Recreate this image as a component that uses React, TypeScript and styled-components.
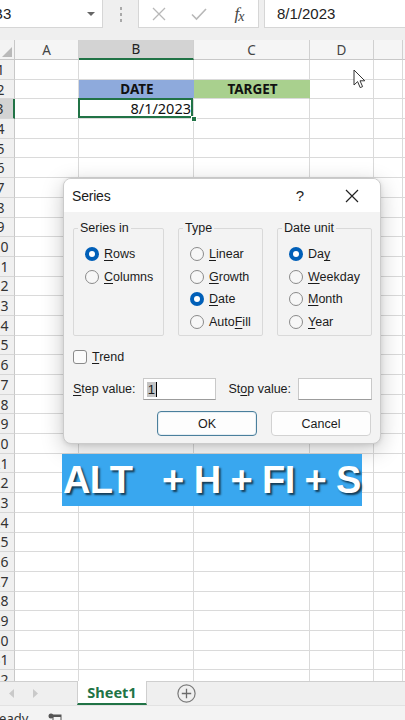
import React from 'react';
import styled, { createGlobalStyle } from 'styled-components';

const GlobalStyle = createGlobalStyle`
  html, body { margin: 0; padding: 0; }
  body {
    width: 405px;
    height: 720px;
    overflow: hidden;
    background: #fff;
    font-family: 'Liberation Sans', Arial, sans-serif;
  }
  * { box-sizing: border-box; }
`;

const GREEN = '#217346';
const GRID = '#dadada';

const COLS = [
  { label: 'A', width: 64 },
  { label: 'B', width: 115 },
  { label: 'C', width: 116 },
  { label: 'D', width: 64 },
  { label: '', width: 29 },
];

type CellData = { text: string; fill?: string; bold?: boolean; align?: 'left' | 'center' | 'right'; selected?: boolean };

const DATA: Record<string, CellData> = {
  '2-1': { text: 'DATE', fill: '#8eaadc', bold: true, align: 'center' },
  '2-2': { text: 'TARGET', fill: '#a9d08e', bold: true, align: 'center' },
  '3-1': { text: '8/1/2023', align: 'right', selected: true },
};

const ROW_COUNT = 32;
const SELECTED_ROW = 3;
const SELECTED_COL = 1;

const Page = styled.div`
  position: relative;
  width: 405px;
  height: 720px;
  display: flex;
  flex-direction: column;
  overflow: hidden;
  background: #fff;
`;

/* ---------- formula bar ---------- */

const TopBar = styled.div`
  height: 40px;
  flex-shrink: 0;
  background: #efefef;
  display: flex;
  align-items: flex-start;
`;

const NameBox = styled.div`
  width: 103px;
  height: 28px;
  background: #fff;
  border-right: 1px solid #d6d6d6;
  border-bottom: 1px solid #d6d6d6;
  display: flex;
  align-items: center;
  justify-content: space-between;
  padding-right: 7px;
  font-size: 15px;
  color: #222;
`;

const NameText = styled.span`
  margin-left: -7px;
`;

const Grip = styled.div`
  width: 35px;
  height: 28px;
  display: flex;
  flex-direction: column;
  align-items: center;
  justify-content: center;
  gap: 3px;
`;

const GripDot = styled.span`
  width: 2px;
  height: 3px;
  background: #a9a9a9;
`;

const FxBox = styled.div`
  width: 121px;
  height: 28px;
  margin-right: 5px;
  background: #fff;
  border: 1px solid #d6d6d6;
  border-top: none;
  display: grid;
  grid-template-columns: repeat(3, 40px);
  align-items: center;
  justify-items: center;
`;

const FxText = styled.span`
  font-family: 'Liberation Serif', serif;
  font-style: italic;
  font-size: 17px;
  color: #444;
  letter-spacing: -1px;
`;

const FxSub = styled.span`
  font-size: 14px;
  position: relative;
  top: 2px;
`;

const FormulaInput = styled.div`
  flex: 1;
  height: 28px;
  background: #fff;
  border-left: 1px solid #d6d6d6;
  border-bottom: 1px solid #d6d6d6;
  display: flex;
  align-items: center;
  padding-left: 12px;
  font-size: 15px;
  color: #222;
`;

/* ---------- sheet ---------- */

const Sheet = styled.div`
  flex: 1;
  overflow: hidden;
  display: grid;
  grid-template-columns: 15px ${COLS.map(c => `${c.width}px`).join(' ')} 1fr;
  grid-template-rows: 20px;
  grid-auto-rows: 19.7px;
  align-content: start;
`;

const Corner = styled.div`
  background: #f3f3f3;
  border-right: 1px solid #c8c8c8;
  border-bottom: 1px solid #c8c8c8;
  display: flex;
  align-items: flex-end;
  justify-content: flex-end;
  padding: 0 2px 2px 0;
`;

const ColHead = styled.div<{ $active?: boolean }>`
  background: ${p => (p.$active ? '#d3d3d3' : '#f5f5f5')};
  border-right: 1px solid #d0d0d0;
  border-bottom: ${p => (p.$active ? `2px solid ${GREEN}` : '1px solid #c8c8c8')};
  display: flex;
  align-items: center;
  justify-content: center;
  font-family: 'Noto Sans', sans-serif;
  font-size: 13.5px;
  color: ${p => (p.$active ? '#222' : '#444')};
`;

const RowHead = styled.div<{ $active?: boolean }>`
  background: ${p => (p.$active ? '#d3d3d3' : '#f0f0f0')};
  border-right: ${p => (p.$active ? `2px solid ${GREEN}` : '1px solid #c8c8c8')};
  border-bottom: 1px solid #d6d6d6;
  display: flex;
  align-items: center;
  justify-content: flex-end;
  overflow: hidden;
  font-family: 'Noto Sans', sans-serif;
  font-size: 14px;
  color: #333;
`;

/* the heading is wider than the visible strip: only its right part shows */
const RowNumber = styled.span`
  flex-shrink: 0;
  width: 27px;
  text-align: center;
`;

const Cell = styled.div<{ $fill?: string; $bold?: boolean; $align?: string; $selected?: boolean; $last?: boolean }>`
  position: relative;
  background: ${p => p.$fill || '#fff'};
  border-right: 1px solid ${p => (p.$last ? 'transparent' : p.$fill || GRID)};
  border-bottom: 1px solid ${GRID};
  display: flex;
  align-items: center;
  justify-content: ${p => (p.$align === 'right' ? 'flex-end' : p.$align === 'center' ? 'center' : 'flex-start')};
  padding: 0 2px 0 4px;
  white-space: nowrap;
  font-family: 'Noto Sans', sans-serif;
  font-size: ${p => (p.$bold ? '13.5px' : '14.5px')};
  font-weight: ${p => (p.$bold ? 700 : 400)};
  color: #111;
  overflow: ${p => (p.$selected ? 'visible' : 'hidden')};
  box-shadow: ${p => (p.$selected ? `inset 0 0 0 2px ${GREEN}` : 'none')};
  margin: ${p => (p.$selected ? '-1px 0 0 -1px' : '0')};
  z-index: ${p => (p.$selected ? 2 : 'auto')};
`;

const FillHandle = styled.span`
  position: absolute;
  right: -4px;
  bottom: -4px;
  width: 6px;
  height: 6px;
  background: ${GREEN};
  border: 1px solid #fff;
`;

/* ---------- tabs & status ---------- */

const TabBar = styled.div`
  height: 24px;
  flex-shrink: 0;
  background: #efefef;
  border-top: 1px solid #cfcfcf;
  display: flex;
  align-items: stretch;
`;

const TabNav = styled.div`
  width: 77px;
  display: flex;
  align-items: center;
  gap: 19px;
  padding-left: 9px;
`;

const SheetTab = styled.div`
  width: 70px;
  margin-top: -1px;
  background: #fff;
  border-left: 1px solid #cfcfcf;
  border-right: 1px solid #cfcfcf;
  border-bottom: 2px solid ${GREEN};
  display: flex;
  align-items: center;
  justify-content: center;
  font-family: 'Noto Sans', sans-serif;
  font-size: 14.5px;
  font-weight: 700;
  color: ${GREEN};
`;

const AddSheet = styled.div`
  margin-left: 30px;
  display: flex;
  align-items: center;
`;

const StatusBar = styled.div`
  height: 15px;
  flex-shrink: 0;
  background: #f3f3f3;
  border-top: 1px solid #e2e2e2;
  display: flex;
  align-items: flex-start;
  overflow: hidden;
  padding-top: 5px;
  font-family: 'Noto Sans', sans-serif;
  font-size: 13px;
  color: #333;
`;

const StatusText = styled.span`
  margin-left: -9px;
  line-height: 14px;
`;

const StatusIcon = styled.span`
  margin-left: 20px;
  margin-top: 2px;
  display: flex;
`;

/* ---------- dialog ---------- */

const Dialog = styled.div`
  position: absolute;
  left: 63px;
  top: 178px;
  width: 318px;
  height: 266px;
  z-index: 10;
  background: #f3f3f3;
  border: 1px solid #cbcbcb;
  border-radius: 8px;
  box-shadow: 0 6px 22px rgba(0, 0, 0, 0.22), 0 1px 4px rgba(0, 0, 0, 0.1);
  overflow: hidden;
  font-family: 'Liberation Sans', Arial, sans-serif;
  font-size: 12.5px;
  color: #1b1b1b;
`;

const TitleBar = styled.div`
  height: 33px;
  background: #fff;
  display: flex;
  align-items: center;
  padding-left: 8px;
`;

const Title = styled.div`
  flex: 1;
  font-size: 14px;
  letter-spacing: -0.2px;
`;

const TitleButtons = styled.div`
  display: flex;
  gap: 6px;
  margin-right: 5px;
`;

const TitleButton = styled.div`
  width: 46px;
  height: 33px;
  display: flex;
  align-items: center;
  justify-content: center;
  font-size: 15px;
  color: #222;
`;

const Body = styled.div`
  padding: 7px 8px 0 9px;
  display: flex;
  flex-direction: column;
`;

const Groups = styled.div`
  display: flex;
  gap: 14px;
`;

const Group = styled.fieldset<{ $width: number }>`
  width: ${p => p.$width}px;
  height: 117px;
  margin: 0;
  padding: 0;
  border: 1px solid #d9d9d9;
  border-radius: 2px;
  min-width: 0;
`;

const Legend = styled.legend`
  margin-left: 4px;
  padding: 0 2px;
  line-height: 18px;
  font-size: 12.5px;
`;

const Options = styled.div`
  display: flex;
  flex-direction: column;
  padding: 6px 0 0 11px;
`;

const Option = styled.div`
  height: 22.5px;
  display: flex;
  align-items: center;
  gap: 5px;
  white-space: nowrap;
`;

const RadioDot = styled.span<{ $checked?: boolean }>`
  flex-shrink: 0;
  width: 14px;
  height: 14px;
  border-radius: 50%;
  background: ${p => (p.$checked ? '#005fb8' : '#f7f7f7')};
  border: ${p => (p.$checked ? 'none' : '1px solid #8a8a8a')};
  display: flex;
  align-items: center;
  justify-content: center;
  &::after {
    content: '';
    display: ${p => (p.$checked ? 'block' : 'none')};
    width: 6px;
    height: 6px;
    border-radius: 50%;
    background: #fff;
  }
`;

const Key = styled.span`
  text-decoration: underline;
  text-underline-offset: 2px;
`;

const TrendRow = styled.div`
  margin-top: 14px;
  height: 14px;
  display: flex;
  align-items: center;
  gap: 5px;
`;

const CheckBox = styled.span`
  width: 14px;
  height: 14px;
  border-radius: 3px;
  border: 1px solid #8a8a8a;
  background: #fbfbfb;
`;

const ValueRow = styled.div`
  margin-top: 14px;
  height: 22px;
  display: flex;
  align-items: center;
`;

const FieldLabel = styled.span<{ $gap?: number }>`
  width: 70px;
  margin-left: ${p => p.$gap || 0}px;
  white-space: nowrap;
`;

const Field = styled.div<{ $width: number }>`
  width: ${p => p.$width}px;
  height: 22px;
  background: #fff;
  border: 1px solid #c9c9c9;
  border-bottom-color: #9c9c9c;
  display: flex;
  align-items: center;
  padding-left: 3px;
`;

const Selection = styled.span`
  background: #c4c4c4;
  padding: 0 1px;
  font-size: 13px;
  line-height: 15px;
`;

const Caret = styled.span`
  width: 1px;
  height: 15px;
  background: #000;
`;

const ButtonRow = styled.div`
  margin-top: 11px;
  display: flex;
  justify-content: flex-end;
  gap: 14px;
  padding-right: 1px;
`;

const Button = styled.div<{ $primary?: boolean }>`
  width: 100px;
  height: 25px;
  border-radius: 4px;
  background: #fdfdfd;
  border: 1px solid ${p => (p.$primary ? '#4a7f9c' : '#d2d2d2')};
  box-shadow: ${p => (p.$primary ? 'inset 0 0 0 1px #e6eef3' : 'none')};
  display: flex;
  align-items: center;
  justify-content: center;
  font-size: 12.5px;
`;

/* ---------- overlays ---------- */

const Banner = styled.div`
  position: absolute;
  left: 62px;
  top: 454px;
  width: 300px;
  height: 52px;
  z-index: 11;
  background: #39a7ef;
  display: flex;
  align-items: center;
  padding-left: 1px;
  white-space: pre;
  font-family: 'Liberation Sans', Arial, sans-serif;
  font-weight: 700;
  font-size: 38px;
  letter-spacing: -0.6px;
  color: #fff;
  text-shadow: 2px 2px 2px rgba(0, 0, 0, 0.65);
`;

const Pointer = styled.svg`
  position: absolute;
  left: 353px;
  top: 69px;
  z-index: 5;
`;

const Triangle = ({ dir, color }: { dir: 'left' | 'right' | 'down'; color: string }) => {
  const pts = dir === 'left' ? '5,0 5,9 0,4.5' : dir === 'right' ? '0,0 0,9 5,4.5' : '0,0 8,0 4,4';
  const w = dir === 'down' ? 8 : 5;
  const h = dir === 'down' ? 4 : 9;
  return (
    <svg width={w} height={h} viewBox={`0 0 ${w} ${h}`}>
      <polygon points={pts} fill={color} />
    </svg>
  );
};

const Radio = ({ checked, children }: { checked?: boolean; children: React.ReactNode }) => (
  <Option>
    <RadioDot $checked={checked} />
    <span>{children}</span>
  </Option>
);

export default function App() {
  const rows = Array.from({ length: ROW_COUNT }, (_, i) => i + 1);

  return (
    <Page>
      <GlobalStyle />

      <TopBar>
        <NameBox>
          <NameText>B3</NameText>
          <Triangle dir="down" color="#666" />
        </NameBox>
        <Grip>
          <GripDot />
          <GripDot />
          <GripDot />
        </Grip>
        <FxBox>
          <svg width="14" height="14" viewBox="0 0 14 14">
            <path d="M1 1 L13 13 M13 1 L1 13" stroke="#b8b8b8" strokeWidth="1.3" fill="none" />
          </svg>
          <svg width="16" height="14" viewBox="0 0 16 14">
            <path d="M1 7.5 L5.5 12 L15 2" stroke="#b8b8b8" strokeWidth="1.6" fill="none" />
          </svg>
          <FxText>
            f<FxSub>x</FxSub>
          </FxText>
        </FxBox>
        <FormulaInput>8/1/2023</FormulaInput>
      </TopBar>

      <Sheet>
        <Corner>
          <svg width="10" height="10" viewBox="0 0 10 10">
            <polygon points="10,0 10,10 0,10" fill="#b9b9b9" />
          </svg>
        </Corner>
        {COLS.map((c, ci) => (
          <ColHead key={ci} $active={ci === SELECTED_COL}>
            {c.label}
          </ColHead>
        ))}
        <ColHead />

        {rows.map(r => (
          <React.Fragment key={r}>
            <RowHead $active={r === SELECTED_ROW}>
              <RowNumber>{r}</RowNumber>
            </RowHead>
            {COLS.map((_, ci) => {
              const d = DATA[`${r}-${ci}`];
              return (
                <Cell
                  key={ci}
                  $fill={d?.fill}
                  $bold={d?.bold}
                  $align={d?.align}
                  $selected={d?.selected}
                >
                  {d?.text}
                  {d?.selected && <FillHandle />}
                </Cell>
              );
            })}
            <Cell $last />
          </React.Fragment>
        ))}
      </Sheet>

      <TabBar>
        <TabNav>
          <Triangle dir="left" color="#c9c9c9" />
          <Triangle dir="right" color="#c9c9c9" />
        </TabNav>
        <SheetTab>Sheet1</SheetTab>
        <AddSheet>
          <svg width="19" height="19" viewBox="0 0 19 19">
            <circle cx="9.5" cy="9.5" r="8.6" stroke="#7a7a7a" strokeWidth="1.2" fill="none" />
            <path d="M9.5 4.8 V14.2 M4.8 9.5 H14.2" stroke="#6a6a6a" strokeWidth="1.3" />
          </svg>
        </AddSheet>
      </TabBar>

      <StatusBar>
        <StatusText>Ready</StatusText>
        <StatusIcon>
          <svg width="14" height="10" viewBox="0 0 14 10">
            <rect x="5" y="2" width="8" height="8" fill="none" stroke="#555" strokeWidth="1" />
            <rect x="5" y="2" width="8" height="2" fill="#555" />
            <circle cx="3" cy="3" r="2.5" fill="#555" />
          </svg>
        </StatusIcon>
      </StatusBar>

      <Pointer width="13" height="20" viewBox="0 0 13 20">
        <path
          d="M1 1 L1 16 L4.6 12.6 L7.2 18.6 L9.6 17.6 L7 11.8 L11.8 11.8 Z"
          fill="#fff"
          stroke="#333"
          strokeWidth="1"
          strokeLinejoin="round"
        />
      </Pointer>

      <Dialog>
        <TitleBar>
          <Title>Series</Title>
          <TitleButtons>
            <TitleButton>?</TitleButton>
            <TitleButton>
              <svg width="14" height="14" viewBox="0 0 14 14">
                <path d="M1 1 L13 13 M13 1 L1 13" stroke="#222" strokeWidth="1.2" fill="none" />
              </svg>
            </TitleButton>
          </TitleButtons>
        </TitleBar>

        <Body>
          <Groups>
            <Group $width={91}>
              <Legend>Series in</Legend>
              <Options>
                <Radio checked>
                  <Key>R</Key>ows
                </Radio>
                <Radio>
                  <Key>C</Key>olumns
                </Radio>
              </Options>
            </Group>
            <Group $width={85}>
              <Legend>Type</Legend>
              <Options>
                <Radio>
                  <Key>L</Key>inear
                </Radio>
                <Radio>
                  <Key>G</Key>rowth
                </Radio>
                <Radio checked>
                  <Key>D</Key>ate
                </Radio>
                <Radio>
                  Auto<Key>F</Key>ill
                </Radio>
              </Options>
            </Group>
            <Group $width={95}>
              <Legend>Date unit</Legend>
              <Options>
                <Radio checked>
                  Da<Key>y</Key>
                </Radio>
                <Radio>
                  <Key>W</Key>eekday
                </Radio>
                <Radio>
                  <Key>M</Key>onth
                </Radio>
                <Radio>
                  <Key>Y</Key>ear
                </Radio>
              </Options>
            </Group>
          </Groups>

          <TrendRow>
            <CheckBox />
            <span>
              <Key>T</Key>rend
            </span>
          </TrendRow>

          <ValueRow>
            <FieldLabel>
              <Key>S</Key>tep value:
            </FieldLabel>
            <Field $width={73}>
              <Selection>1</Selection>
              <Caret />
            </Field>
            <FieldLabel $gap={13}>
              St<Key>o</Key>p value:
            </FieldLabel>
            <Field $width={74} />
          </ValueRow>

          <ButtonRow>
            <Button $primary>OK</Button>
            <Button>Cancel</Button>
          </ButtonRow>
        </Body>
      </Dialog>

      <Banner>{'ALT   + H + FI + S'}</Banner>
    </Page>
  );
}
